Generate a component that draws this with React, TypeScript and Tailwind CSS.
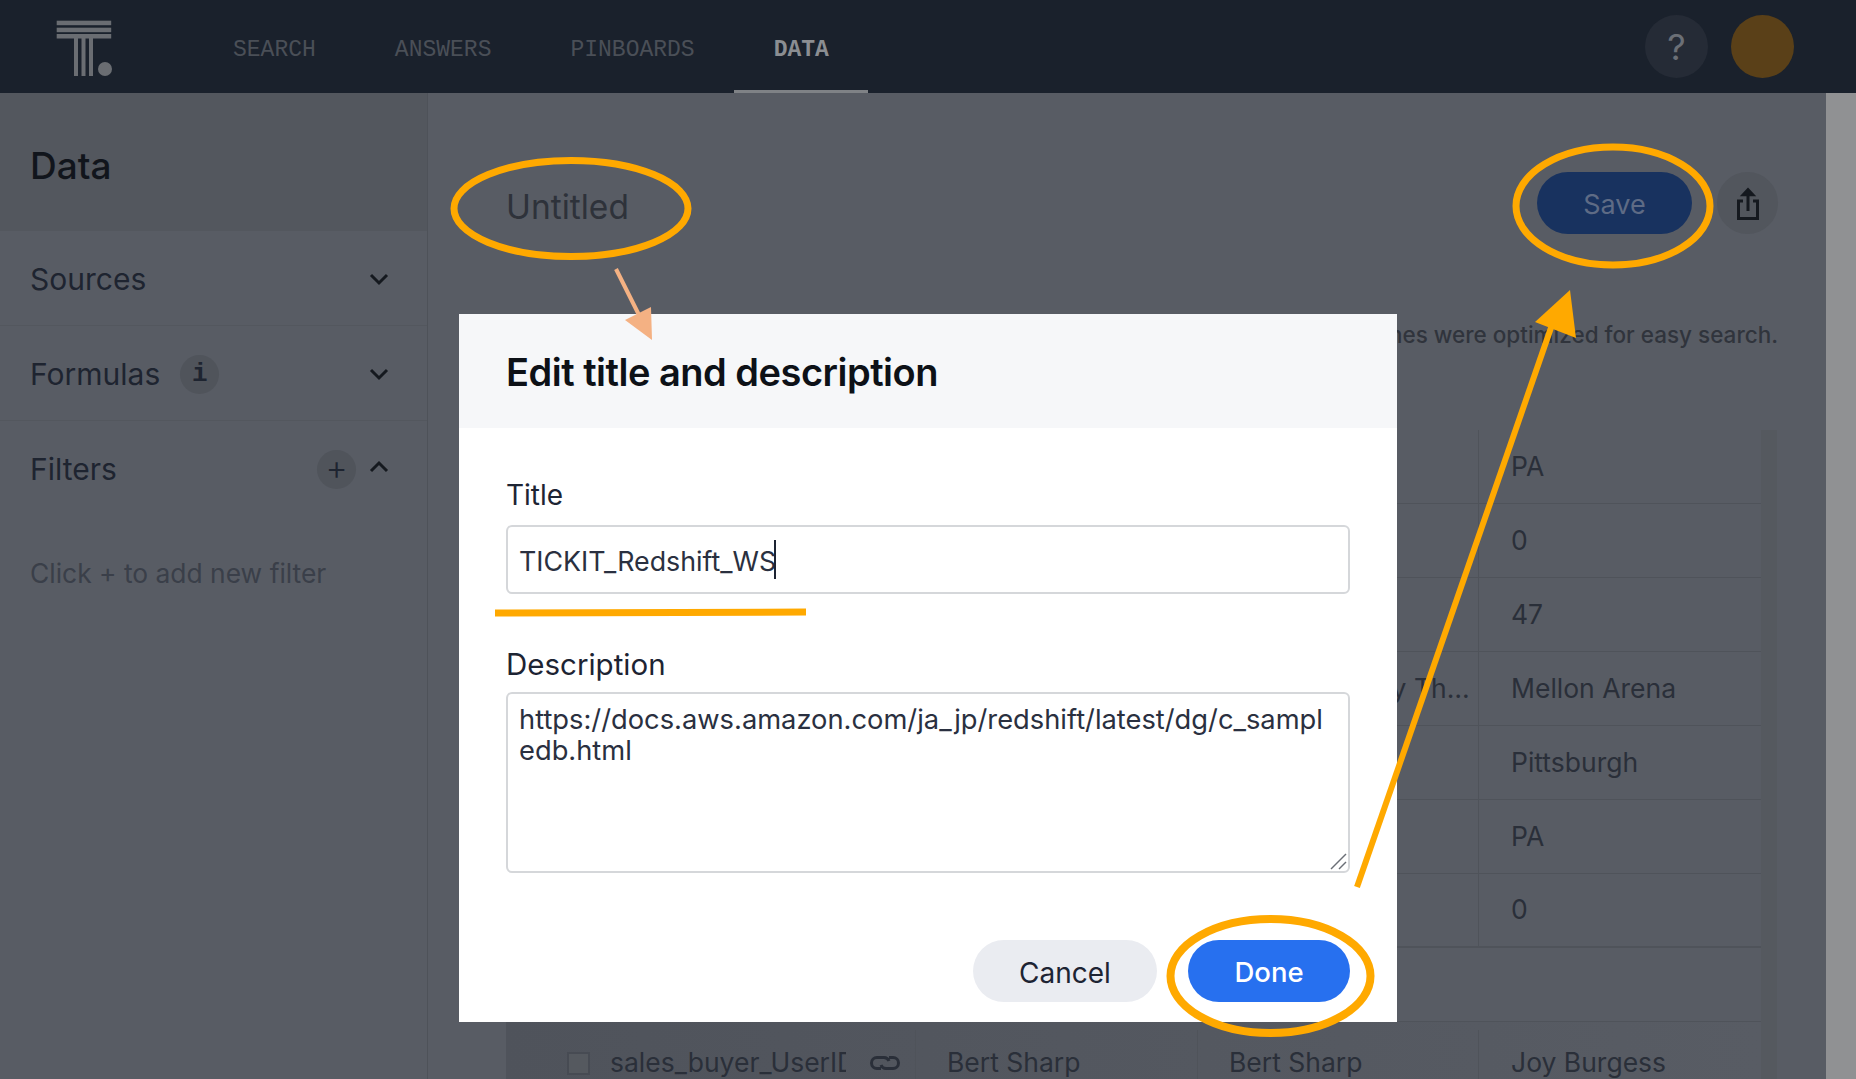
const tableRows = [
  { cells: ["", "", "", "PA"] },
  { cells: ["", "", "", "0"] },
  { cells: ["", "", "", "47"] },
  { cells: ["", "", "Pittsburgh City Theater", "Mellon Arena"] },
  { cells: ["", "", "", "Pittsburgh"] },
  { cells: ["", "", "", "PA"] },
  { cells: ["", "", "", "0"] },
];

function Logo() {
  return (
    <svg width="56" height="59" viewBox="0 0 56 59" fill="#6a6d72">
      <rect x="0.700" y="3.700" width="54.500" height="4.500" />
      <rect x="0.700" y="10.700" width="54.500" height="4.500" />
      <rect x="0.700" y="17" width="54.500" height="4.500" />
      <rect x="18" y="21" width="4" height="38" />
      <rect x="25.500" y="21" width="4" height="38" />
      <rect x="33" y="21" width="4" height="38" />
      <circle cx="49" cy="52" r="7" />
    </svg>
  );
}

function ShareIcon() {
  return (
    <svg width="22" height="34" viewBox="0 0 22 34" fill="none" stroke="#15191f" strokeWidth="3">
      <path d="M6 15H1.500v17.500h19V15H16" />
      <path d="M11 6v19" />
      <path d="M4.500 9.500L11 2.500l6.500 7z" fill="#15191f" strokeWidth="1.500" />
    </svg>
  );
}

function LinkIcon() {
  return (
    <svg width="32" height="16" viewBox="0 0 32 16" fill="none" stroke="#2a2f39" strokeWidth="3">
      <path d="M12 13.500H8a5.500 5.500 0 0 1 0-11h7a5.500 5.500 0 0 1 5 3.500" />
      <path d="M20 2.500h4a5.500 5.500 0 0 1 0 11h-7a5.500 5.500 0 0 1-5-3.500" />
    </svg>
  );
}

function Chevron({ up = false }: { up?: boolean }) {
  return (
    <svg width="20" height="13" viewBox="0 0 20 13" fill="none" stroke="#15191f" strokeWidth="3">
      <path d={up ? "M2 11l8-8 8 8" : "M2 2l8 8 8-8"} />
    </svg>
  );
}

function Annotations() {
  return (
    <svg className="absolute inset-0 pointer-events-none" width="1856" height="1079" viewBox="0 0 1856 1079" fill="none">
      <ellipse cx="571" cy="208.500" rx="117" ry="48" stroke="#ffa900" strokeWidth="7" />
      <ellipse cx="1613" cy="206" rx="97" ry="59" stroke="#ffa900" strokeWidth="7" />
      <ellipse cx="1270.500" cy="976" rx="100" ry="57" stroke="#ffa900" strokeWidth="8" />
      <path d="M616 269L644 325" stroke="#f4b183" strokeWidth="4" />
      <path d="M652 340L625 320L651 307Z" fill="#f4b183" />
      <path d="M1357 887L1553 322" stroke="#ffa900" strokeWidth="6" />
      <path d="M1570 290L1535 322L1576 338Z" fill="#ffa900" />
      <path d="M495 613L806 612" stroke="#ffa900" strokeWidth="7" />
    </svg>
  );
}

function Dialog() {
  return (
    <div className="absolute left-[459px] top-[314px] w-[938px] h-[708px] bg-white flex flex-col">
      <div className="h-[114px] bg-[#f6f7f9] flex items-center px-[47px] pt-[2px]">
        <h2 className="text-[38px] font-semibold text-[#0d1117] tracking-[-0.5px]">Edit title and description</h2>
      </div>
      <div className="flex flex-col px-[47px] pt-[49px] flex-1">
        <label className="text-[28px] leading-[36px] text-[#1d2433]">Title</label>
        <div className="relative mt-[12px]">
          <input
            readOnly
            defaultValue="TICKIT_Redshift_WS"
            className="w-full h-[69px] border-2 border-[#d5d7da] rounded-[6px] pl-[11px] pr-[12px] pt-[2px] text-[26.800px] text-[#2a3040] outline-none"
          />
          <span className="absolute left-[268px] top-[15px] w-[2px] h-[39px] bg-[#1d2433]"></span>
        </div>
        <label className="text-[29.500px] leading-[36px] text-[#1d2433] mt-[52px]">Description</label>
        <div className="relative mt-[10px]">
          <textarea
            readOnly
            defaultValue="https://docs.aws.amazon.com/ja_jp/redshift/latest/dg/c_sampledb.html"
            className="block w-full h-[181px] resize-none border-2 border-[#d5d7da] rounded-[6px] pl-[11px] pr-[15px] py-[10px] text-[27.300px] leading-[31px] text-[#2a3040] outline-none"
          />
          <svg className="absolute right-[2px] bottom-[3px]" width="18" height="18" viewBox="0 0 18 18" stroke="#6b6f76" strokeWidth="1.500">
            <path d="M1 17L16 2" />
            <path d="M9 17L16 10" />
          </svg>
        </div>
        <div className="flex justify-end gap-[31px] mt-[67px]">
          <button className="w-[184px] h-[62px] rounded-full bg-[#eaecf1] pt-[3px] text-[28px] text-[#1d2433]">Cancel</button>
          <button className="w-[162px] h-[62px] rounded-full bg-[#2770ef] pt-[3px] text-[27.500px] font-medium text-white">Done</button>
        </div>
      </div>
    </div>
  );
}

export default function App() {
  return (
    <div className="relative w-[1856px] h-[1079px] overflow-hidden bg-[#585c64] font-['Inter',sans-serif]">
      {/* Top nav */}
      <header className="h-[93px] bg-[#1a212c] flex items-center pl-[56px] pr-[62px]">
        <Logo />
        <nav className="flex ml-[81.500px] h-full font-['Liberation_Mono',monospace] text-[23px]">
          <a className="flex items-center px-[39.500px] pt-[10px] border-b-[3px] border-transparent text-[#4a4f57]">SEARCH</a>
          <a className="flex items-center px-[39.500px] pt-[10px] border-b-[3px] border-transparent text-[#4a4f57]">ANSWERS</a>
          <a className="flex items-center px-[39.500px] pt-[10px] border-b-[3px] border-transparent text-[#4a4f57]">PINBOARDS</a>
          <a className="flex items-center px-[39.500px] pt-[10px] border-b-[3px] border-[#7f8286] text-[#8b8e92] font-bold">DATA</a>
        </nav>
        <div className="ml-auto flex gap-[23px]">
          <div className="w-[63px] h-[63px] rounded-full bg-[#252b36] flex items-center justify-center text-[36px] text-[#6b6f76]">?</div>
          <div className="w-[63px] h-[63px] rounded-full bg-[#5a4018]"></div>
        </div>
      </header>

      <div className="flex h-[986px]">
        {/* Sidebar */}
        <aside className="w-[428px] border-r border-[#4e5259] flex flex-col">
          <div className="h-[138px] bg-[#53575e] flex items-center px-[30px] pt-[8px]">
            <h1 className="text-[37px] font-medium text-[#11151c]">Data</h1>
          </div>
          <div className="h-[95px] border-b border-[#53575e] flex items-center justify-between pl-[30px] pr-[38px] pt-[2px] text-[30px] text-[#1e2430]">
            <span>Sources</span>
            <Chevron />
          </div>
          <div className="h-[95px] border-b border-[#53575e] flex items-center pl-[30px] pr-[38px] pt-[2px] text-[30px] text-[#1e2430]">
            <span>Formulas</span>
            <span className="ml-[20px] w-[39px] h-[39px] rounded-full bg-[#50545b] flex items-center justify-center font-['Liberation_Mono',monospace] font-bold text-[26px] text-[#1e2430]">i</span>
            <span className="ml-auto"><Chevron /></span>
          </div>
          <div className="h-[95px] flex items-center pl-[30px] pr-[38px] pt-[2px] text-[30px] text-[#1e2430]">
            <span>Filters</span>
            <span className="ml-auto w-[39px] h-[39px] rounded-full bg-[#50545b] flex items-center justify-center text-[34px] font-light leading-none pb-[3px]">+</span>
            <span className="ml-[13px] -mt-[6px]"><Chevron up /></span>
          </div>
          <p className="mt-[38px] px-[30px] text-[26.400px] text-[#3a3f49]">Click + to add new filter</p>
        </aside>

        {/* Main */}
        <main className="w-[1398px] flex flex-col pl-[78px] pr-[48px]">
          <div className="flex items-center justify-between mt-[79px]">
            <span className="text-[33.500px] text-[#2e323a] pt-[8px]">Untitled</span>
            <div className="flex items-center gap-[25px]">
              <button className="w-[155px] h-[62px] rounded-full bg-[#18325f] pt-[4px] text-[27px] text-[#5e6b85]">Save</button>
              <span className="w-[61px] h-[62px] rounded-full bg-[#52565d] flex items-center justify-center">
                <ShareIcon />
              </span>
            </div>
          </div>
          <p className="mt-[86px] h-[29px] leading-[29px] text-right text-[22.500px] font-medium text-[#30343c] whitespace-nowrap">Some of the column names were optimized for easy search.</p>

          <div className="mt-[81px] w-[1271px] flex">
            <div className="w-[1255px] flex flex-col">
              {tableRows.map((row, i) => (
                <div key={i} className={`grid grid-cols-[410px_282px_281px_282px] h-[74px] border-b border-[#4f535a] ${i === 6 ? "border-b-2" : ""}`}>
                  {row.cells.map((cell, j) => (
                    <div key={j} className={`flex items-center pr-[6px] border-r border-[#4f535a] last:border-r-0 text-[26.500px] text-[#2a2f39] ${j === 2 ? "pl-[24px]" : "pl-[32px]"}`}>
                      <span className="truncate">{cell}</span>
                    </div>
                  ))}
                </div>
              ))}
              <div className="h-[74px] border-b border-[#4f535a]"></div>
              <div className="grid grid-cols-[410px_282px_281px_282px] h-[74px] pt-[8px] text-[26.500px] text-[#2a2f39] bg-linear-to-r from-[#4f535b] to-[#585c64]">
                <div className="flex items-center pl-[61px] border-r border-[#4f535a]">
                  <span className="w-[23px] h-[23px] border-2 border-[#474b53] bg-[#55595f] shrink-0"></span>
                  <span className="ml-[20px] w-[236px] overflow-hidden whitespace-nowrap">sales_buyer_UserID</span>
                  <span className="ml-[23px]"><LinkIcon /></span>
                </div>
                <div className="flex items-center pl-[31px] border-r border-[#4f535a]">Bert Sharp</div>
                <div className="flex items-center pl-[31px] border-r border-[#4f535a]">Bert Sharp</div>
                <div className="flex items-center pl-[32px]">Joy Burgess</div>
              </div>
            </div>
            <div className="w-[16px] bg-[#55595f]"></div>
          </div>
        </main>

        <div className="flex-1 bg-[#909193]"></div>
      </div>

      <Dialog />
      <Annotations />
    </div>
  );
}
